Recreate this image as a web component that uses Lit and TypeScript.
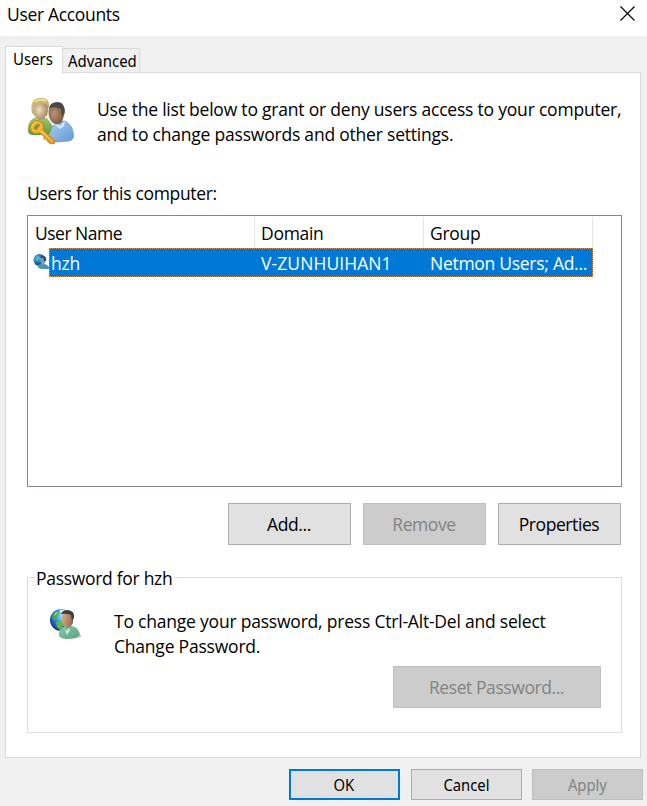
import { LitElement, html, css, svg } from "lit";
import { customElement, property } from "lit/decorators.js";

const globe = svg`
  <circle cx="11" cy="12" r="11" fill="url(#sea)"/>
  <path d="M3 6L7 3 9 4 8 7 6 8 7 11 4 12 2 10Z" fill="#46ad3f"/>
  <path d="M6 14l5 0 2 3-3 5-3-3z" fill="#5cbb3c"/>
  <path d="M5 5l3-1-1 2-3 2z" fill="#a3dd78"/>
  <path d="M10 2l5 0-2 3-3 0z" fill="#d8f5fb"/>`;

@customElement("account-icon")
class AccountIcon extends LitElement {
  @property() kind = "pair";

  static styles = css`
    :host { display: block; flex: none; }
    svg { display: block; width: 100%; height: 100%; overflow: visible; }
  `;

  render() {
    if (this.kind === "pair") return this.pair();
    return this.kind === "mini" ? this.mini() : this.person();
  }

  private pair() {
    return html`<svg viewBox="0 0 48 48">
      <defs>
        <linearGradient id="green" x2="0" y2="1"><stop stop-color="#a5c879"/><stop offset="1" stop-color="#5f9a35"/></linearGradient>
        <linearGradient id="blue" x2="1" y2="1"><stop stop-color="#a9cff3"/><stop offset="1" stop-color="#6399d2"/></linearGradient>
        <linearGradient id="hair" x2="1" y2="1"><stop stop-color="#ded18b"/><stop offset="1" stop-color="#9a8a43"/></linearGradient>
        <radialGradient id="pale" cx=".4" cy=".4" r=".65"><stop stop-color="#f0dcc2"/><stop offset="1" stop-color="#a9855f"/></radialGradient>
        <radialGradient id="dark" cx=".35" cy=".5" r=".7"><stop stop-color="#bb9270"/><stop offset="1" stop-color="#6b4c35"/></radialGradient>
        <linearGradient id="gold" x2="1" y2="1"><stop stop-color="#ffc93f"/><stop offset="1" stop-color="#e78a18"/></linearGradient>
      </defs>
      <path d="M1 31Q1 23 9 20L20 21 26 29 22 38H5Q0 37 1 31Z" fill="url(#green)"/>
      <path d="M5 16Q2 3 12 1Q22 0 22 8L20 19 9 20Z" fill="url(#hair)"/>
      <path d="M7 8Q14 4 20 8Q21 17 17 22L12 23Q6 17 7 8Z" fill="url(#pale)"/>
      <path d="M5 9Q6 1 14 1Q22 2 21 8Q13 4 5 9Z" fill="#cbbb68"/>
      <path d="M8 5Q13 1 19 4" fill="none" stroke="#f0e7b2" stroke-width="1.5"/>
      <path d="M22 43Q23 29 31 25L38 24Q46 28 46.500 38Q47 43 42 44L31 45Q25 45 22 43Z" fill="url(#blue)" stroke="#638eba" stroke-width=".6"/>
      <path d="M29 26l4 3 5-5-1 5-4 3-5-4z" fill="#d4e7fb"/>
      <path d="M21.500 14Q23 6 30 6Q38 7 38 15L35 25Q31 29 26 26Q21 22 21.500 14Z" fill="url(#dark)"/>
      <path d="M22 11Q23 5 31 5Q39 6 37 16L35 19 34 12Q29 9 22 11Z" fill="#454849"/>
      <path d="M6 25Q11 22 15 26Q18 29 16 33L28 44 27 47 22 46 19 42 17 42 17 39 12 36Q7 38 4 34Q2 29 6 25Z" fill="url(#gold)" stroke="#bf7517" stroke-width=".8"/>
      <path d="M7 30Q10 25 13 28L10 32Q7 34 7 30Z" fill="#729c3c" stroke="#c3801c" stroke-width=".7"/>
      <path d="M14 34L26 45" stroke="#ffe17e" stroke-width="1"/>
    </svg>`;
  }

  private person() {
    return html`<svg viewBox="0 0 32 32">
      <defs>
        <radialGradient id="sea" cx=".62" cy=".3" r=".7"><stop stop-color="#bdecfa"/><stop offset=".5" stop-color="#3a9fe4"/><stop offset="1" stop-color="#1434a2"/></radialGradient>
        <linearGradient id="face" x2="1" y2=".3"><stop stop-color="#dcb28d"/><stop offset="1" stop-color="#9a6e50"/></linearGradient>
        <linearGradient id="coat" x2="1" y2="1"><stop stop-color="#86c8aa"/><stop offset="1" stop-color="#5ba285"/></linearGradient>
      </defs>
      ${globe}
      <ellipse cx="24" cy="28" rx="7.500" ry="2.500" fill="#999" opacity=".45"/>
      <path d="M9 28Q8 21 15 18L22 18Q29 20 30 27Q27 31 17 31Q11 31 9 28Z" fill="url(#coat)"/>
      <path d="M14 20l2 3 3-3 1 2-3 5z" fill="#c9e9dc"/>
      <path d="M12 7Q18 3 23 7L23 15Q19 22 15 19Q11 16 12 7Z" fill="url(#face)"/>
      <path d="M11 6Q12 2 18 2Q25 3 24 10L22 13 21 7Q16 5 11 6Z" fill="#3d3d3e"/>
    </svg>`;
  }

  private mini() {
    return html`<svg viewBox="0 0 16 16">
      <defs><radialGradient id="orb" cx=".35" cy=".35"><stop stop-color="#6ccbe8"/><stop offset=".6" stop-color="#2a80c8"/><stop offset="1" stop-color="#1b4d95"/></radialGradient></defs>
      <circle cx="6.500" cy="6" r="6" fill="url(#orb)"/>
      <path d="M2 4Q3 2 5 2L4 4 3 6 1 7Z" fill="#45aab0"/>
      <path d="M5 13Q5 10 9 9L14 11 16 13 16 15H9Q6 15 5 13Z" fill="#4597ac"/>
      <path d="M7 4Q10 2 12 4L12 8 10 11Q7 9 7 4Z" fill="#7e9fb9"/>
      <path d="M7 4Q8 1 11 2Q14 3 13 7L11 7 10 4Z" fill="#225184"/>
    </svg>`;
  }
}

@customElement("app-root")
class AppRoot extends LitElement {
  static styles = css`
    :host {
      display: flex; flex-direction: column; box-sizing: border-box;
      width: 647px; height: 806px; background: #f0f0f0; color: #000;
      font: 17.5px/25px "Open Sans", "Noto Sans", sans-serif; letter-spacing: -.21px; overflow: hidden;
    }
    * { box-sizing: border-box; }
    span { white-space: nowrap; }
    .title { display: flex; justify-content: space-between; height: 36px; background: #fff; padding: 2px 12px 0 7px; flex: none; }
    .title span { letter-spacing: -.33px; }
    .close { width: 15px; height: 15px; margin-top: 4px; }
    .tabs { display: flex; align-items: flex-end; height: 37px; padding-left: 5px; flex: none; z-index: 1; }
    .tab { border: 1px solid #d9d9d9; font-family: "Noto Sans", sans-serif; font-size: 17px; letter-spacing: 0; }
    .tab span { display: block; transform: scaleX(.88); transform-origin: left; }
    .active { width: 58px; height: 27px; background: #fff; border-bottom: 0; padding-left: 7px; line-height: 24px; }
    .other { width: 77px; height: 25px; border-left: 0; padding-left: 5px; line-height: 23px; }
    .panel { width: 636px; height: 686px; margin: -1px 0 0 5px; padding: 0 18px 0 21px; background: #fff; border: 1px solid #d9d9d9; flex: none; }
    .intro { display: flex; height: 108px; padding-top: 24px; }
    .pair { width: 48px; height: 48px; margin-right: 22px; }
    .lines { display: flex; flex-direction: column; }
    .label { height: 34px; display: block; letter-spacing: -.33px; }
    .list { width: 595px; height: 272px; border: 1px solid #828790; padding-top: 1px; }
    .head { display: grid; grid-template-columns: 227px 169px 169px; height: 31px; line-height: 33px; letter-spacing: -.3px; }
    .head span { border-right: 1px solid #e5e5e5; padding-left: 7px; }
    .head span + span { padding-left: 6px; }
    .user { letter-spacing: -.5px; }
    .row { display: flex; height: 29px; color: #fff; }
    .mini { width: 16px; height: 16px; margin: 6px 0 0 5px; }
    .sel { display: grid; grid-template-columns: 204px 169px 169px; width: 544px; padding-left: 1px; background: #0078d7; border: 1px dotted #e0904f; line-height: 29px; letter-spacing: -.28px; }
    .sel span + span { padding-left: 6px; }
    .sel .domain { letter-spacing: .08px; }
    .actions { display: flex; gap: 12px; padding: 16px 0 0 201px; }
    button { font: inherit; letter-spacing: -.42px; color: #000; padding: 0 1px 0 0; background: #e1e1e1; border: 1px solid #adadad; white-space: nowrap; }
    button:disabled { color: #838383; background: #ccc; border-color: #bfbfbf; }
    .wide { width: 123px; height: 42px; }
    fieldset { width: 595px; height: 169px; margin: 19px 0 0; padding: 0; border: 1px solid #dcdcdc; }
    legend { margin-left: 7px; padding: 0 2px 0 1px; height: 26px; line-height: 29px; white-space: nowrap; letter-spacing: -.3px; }
    .change { display: flex; margin: 19px 0 0 22px; }
    .person { width: 32px; height: 32px; margin: -1px 32px 0 0; }
    .reset { display: block; width: 208px; height: 42px; margin: 7px 0 0 365px; }
    .footer { display: flex; padding: 11px 0 0 289px; font-family: "Noto Sans", sans-serif; font-size: 17px; }
    .footer button { width: 111px; height: 31px; margin-right: 11px; flex: none; line-height: 29px; letter-spacing: 0; }
    .footer button + button { margin-right: 10px; }
    .footer span { display: inline-block; transform: scaleX(.87); }
    .footer .ok { border: 2px solid #0078d7; line-height: 27px; }
  `;

  render() {
    return html`
      <div class="title"><span>User Accounts</span>
        <svg class="close" viewBox="0 0 15 15"><path d="M.5 .5l14 14M14.5 .5l-14 14" stroke="#000" stroke-width="1.15"/></svg>
      </div>
      <div class="tabs">
        <div class="tab active"><span>Users</span></div>
        <div class="tab other"><span>Advanced</span></div>
      </div>
      <div class="panel">
        <div class="intro"><account-icon class="pair" kind="pair"></account-icon>
          <div class="lines"><span>Use the list below to grant or deny users access to your computer,</span><span>and to change passwords and other settings.</span></div>
        </div>
        <span class="label">Users for this computer:</span>
        <div class="list">
          <div class="head"><span class="user">User Name</span><span>Domain</span><span>Group</span></div>
          <div class="row">
            <account-icon class="mini" kind="mini"></account-icon>
            <div class="sel"><span>hzh</span><span class="domain">V-ZUNHUIHAN1</span><span>Netmon Users; Ad...</span></div>
          </div>
        </div>
        <div class="actions"><button class="wide">Add...</button><button class="wide" disabled>Remove</button><button class="wide">Properties</button></div>
        <fieldset>
          <legend>Password for hzh</legend>
          <div class="change"><account-icon class="person" kind="person"></account-icon>
            <div class="lines"><span>To change your password, press Ctrl-Alt-Del and select</span><span>Change Password.</span></div>
          </div>
          <button class="reset" disabled>Reset Password...</button>
        </fieldset>
      </div>
      <div class="footer"><button class="ok"><span>OK</span></button><button><span>Cancel</span></button><button disabled><span>Apply</span></button></div>
    `;
  }
}
